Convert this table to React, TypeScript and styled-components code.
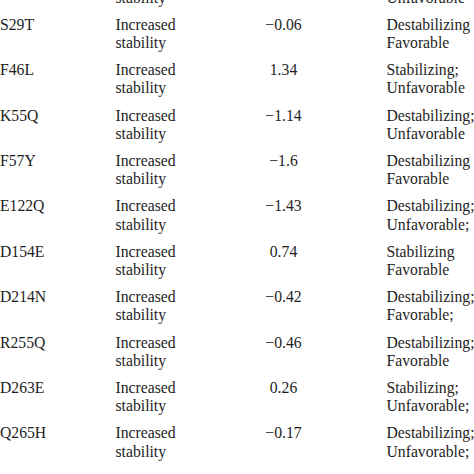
import React from 'react'
import styled, { createGlobalStyle } from 'styled-components'

const GlobalStyle = createGlobalStyle`
  html, body {
    margin: 0;
    padding: 0;
    background: #fff;
    overflow: hidden;
  }
`

interface Row {
  id: string
  effect: string
  ddg: string
  verdict: [string, string]
}

const rows: Row[] = [
  { id: '', effect: 'Increased stability', ddg: '', verdict: ['Destabilizing;', 'Unfavorable'] },
  { id: 'S29T', effect: 'Increased stability', ddg: '\u22120.06', verdict: ['Destabilizing', 'Favorable'] },
  { id: 'F46L', effect: 'Increased stability', ddg: '1.34', verdict: ['Stabilizing;', 'Unfavorable'] },
  { id: 'K55Q', effect: 'Increased stability', ddg: '\u22121.14', verdict: ['Destabilizing;', 'Unfavorable'] },
  { id: 'F57Y', effect: 'Increased stability', ddg: '\u22121.6', verdict: ['Destabilizing', 'Favorable'] },
  { id: 'E122Q', effect: 'Increased stability', ddg: '\u22121.43', verdict: ['Destabilizing;', 'Unfavorable;'] },
  { id: 'D154E', effect: 'Increased stability', ddg: '0.74', verdict: ['Stabilizing', 'Favorable'] },
  { id: 'D214N', effect: 'Increased stability', ddg: '\u22120.42', verdict: ['Destabilizing;', 'Favorable;'] },
  { id: 'R255Q', effect: 'Increased stability', ddg: '\u22120.46', verdict: ['Destabilizing;', 'Favorable'] },
  { id: 'D263E', effect: 'Increased stability', ddg: '0.26', verdict: ['Stabilizing;', 'Unfavorable;'] },
  { id: 'Q265H', effect: 'Increased stability', ddg: '\u22120.17', verdict: ['Destabilizing;', 'Unfavorable;'] },
]

// the screenshot is a crop: the row above S29T only shows its second line
const Table = styled.div`
  margin-top: -29.6px;
  font-family: 'Liberation Serif', 'Times New Roman', serif;
  font-size: 15.7px;
  line-height: 18.2px;
  color: #1e1e1e;
`

const TableRow = styled.div`
  display: grid;
  grid-template-columns: 115.5px 125px 86px 1fr;
  height: 45.4px;
  align-items: start;
`

const Cell = styled.div<{ $align?: 'left' | 'center'; $pad?: number }>`
  text-align: ${(p) => p.$align || 'left'};
  padding-left: ${(p) => p.$pad || 0}px;
  white-space: nowrap;
`

const Effect = styled(Cell)`
  width: 90px;
  white-space: normal;
`

export default function App() {
  return (
    <>
      <GlobalStyle />
      <Table>
        {rows.map((r, i) => (
          <TableRow key={i}>
            <Cell>{r.id}</Cell>
            <Effect>{r.effect}</Effect>
            <Cell $align="center">{r.ddg}</Cell>
            <Cell $pad={60}>
              {r.verdict[0]}
              <br />
              {r.verdict[1]}
            </Cell>
          </TableRow>
        ))}
      </Table>
    </>
  )
}
